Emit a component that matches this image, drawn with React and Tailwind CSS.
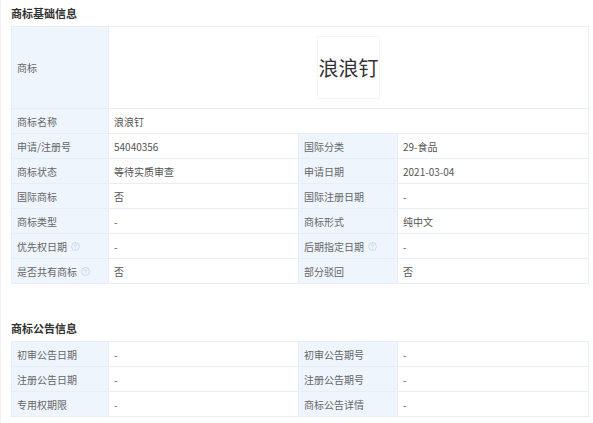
import React from 'react';

const font = { fontFamily: '"Noto Sans CJK SC", "Noto Sans", sans-serif' };

const Help = () => (
    <svg className="ml-1 inline-block" width="9" height="9" viewBox="0 0 16 16" fill="none">
        <circle cx="8" cy="8" r="7" stroke="#b9cfe8" strokeWidth="1.3" />
        <path d="M6.2 6.2a1.8 1.8 0 1 1 2.6 1.6c-.5.3-.8.6-.8 1.2" stroke="#b9cfe8" strokeWidth="1.3" strokeLinecap="round" />
        <circle cx="8" cy="11.3" r=".8" fill="#b9cfe8" />
    </svg>
);

const Label = ({ children, help }) => (
    <div className="bg-[#eef5fd] h-6 flex items-center pl-[5px] text-[10px] text-[#666]">
        {children}
        {help && <Help />}
    </div>
);

const Value = ({ children, span }) => (
    <div className={`bg-white h-6 flex items-center pl-[5px] text-[10px] text-[#555] ${span ? 'col-span-3' : ''}`}>
        {children}
    </div>
);

const rows = [
    [['申请/注册号', '54040356'], ['国际分类', '29-食品']],
    [['商标状态', '等待实质审查'], ['申请日期', '2021-03-04']],
    [['国际商标', '否'], ['国际注册日期', '-']],
    [['商标类型', '-'], ['商标形式', '纯中文']],
    [['优先权日期', '-', true], ['后期指定日期', '-', true]],
    [['是否共有商标', '否', true], ['部分驳回', '否']],
];

const notice = [
    [['初审公告日期', '-'], ['初审公告期号', '-']],
    [['注册公告日期', '-'], ['注册公告期号', '-']],
    [['专用权期限', '-'], ['商标公告详情', '-']],
];

const Grid = ({ children }) => (
    <div className="grid grid-cols-[96px_189px_98px_1fr] gap-px bg-[#e6eef7] border border-[#e6eef7] mr-[4px]">
        {children}
    </div>
);

const Pairs = ({ data }) =>
    data.map((r, i) => (
        <React.Fragment key={i}>
            {r.map(([l, v, h]) => (
                <React.Fragment key={l}>
                    <Label help={h}>{l}</Label>
                    <Value>{v}</Value>
                </React.Fragment>
            ))}
        </React.Fragment>
    ));

export default function App() {
    return (
        <div className="w-[593px] h-[423px] bg-white overflow-hidden border-l border-[#f0f0f0]" style={font}>
            <div className="pl-[10px]">
                <h2 className="text-[11px] font-bold text-[#333] h-[26px] flex items-center">商标基础信息</h2>
                <Grid>
                    <div className="bg-[#eef5fd] h-[81px] flex items-center pl-[5px] text-[10px] text-[#666]">商标</div>
                    <div className="bg-white col-span-3 h-[81px] flex items-center justify-center">
                        <div className="w-[63px] h-[63px] border border-[#f6f6f6] flex items-center justify-center text-[20px] text-[#333] leading-none">
                            浪浪钉
                        </div>
                    </div>
                    <Label>商标名称</Label>
                    <Value span>浪浪钉</Value>
                    <Pairs data={rows} />
                </Grid>
                <h2 className="text-[11px] font-bold text-[#333] mt-[31px] h-[26px] flex items-center">商标公告信息</h2>
                <Grid>
                    <Pairs data={notice} />
                </Grid>
            </div>
        </div>
    );
}
